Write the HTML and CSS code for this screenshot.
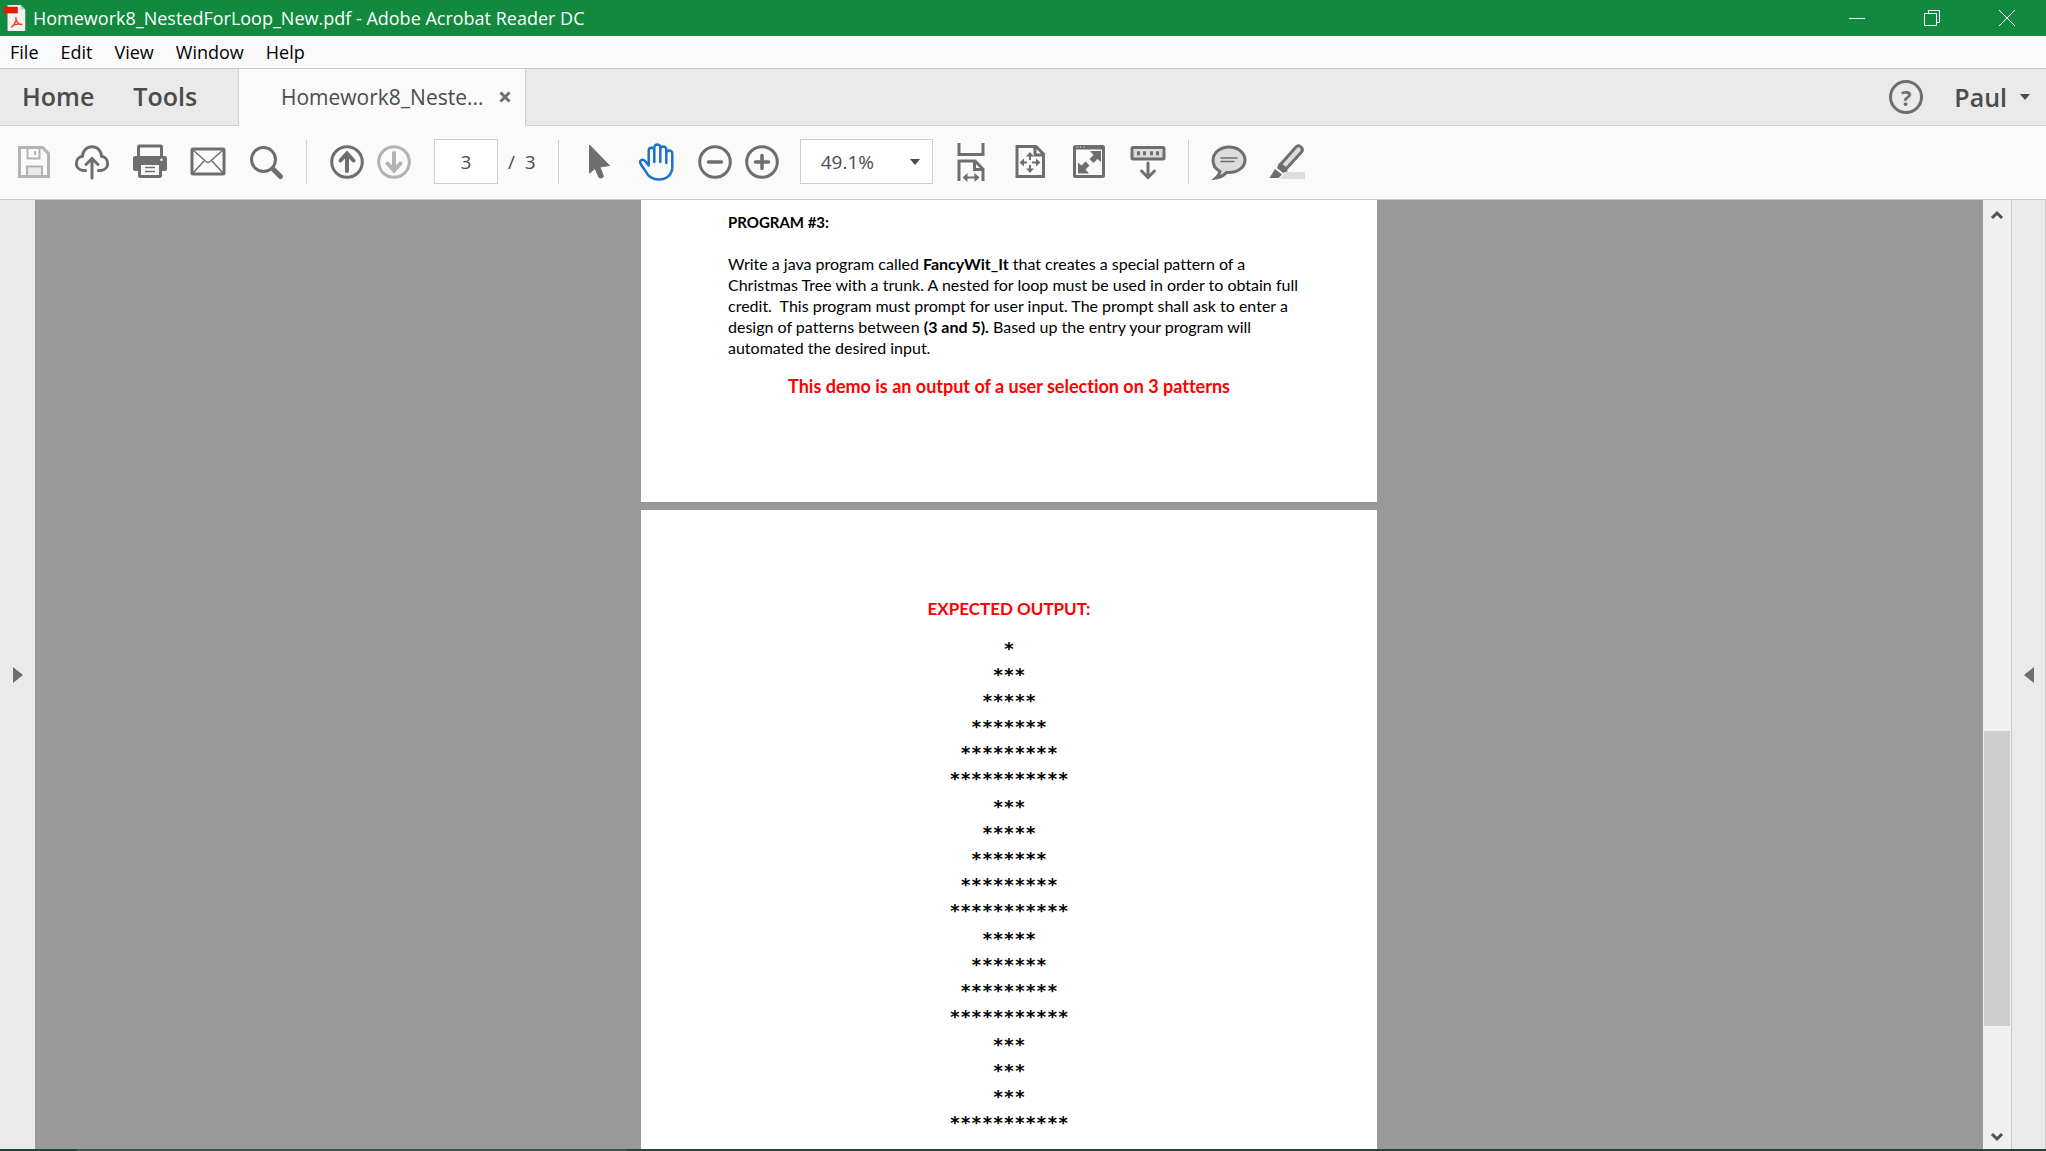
FILE: index.html
```
<!DOCTYPE html>
<html lang="en">
<head>
    <meta charset="UTF-8">
    <meta name="viewport" content="width=device-width, initial-scale=1.0">
    <title>Homework8_NestedForLoop_New.pdf - Adobe Acrobat Reader DC</title>
    <link rel="stylesheet" href="styles.css">
</head>
<body>
    <!-- Window title bar -->
    <header class="title-bar">
        <svg class="app-icon" viewBox="0 0 24 30">
            <path d="M4 1h14l5 5v23H4z" fill="#f4f1ef"/>
            <path d="M18 1l5 5h-5z" fill="#c9c5c2"/>
            <path d="M0 3h15v7H0z" fill="#e31b05"/>
            <path d="M8 25c3-2 6-7 5-11M13 15c0 4 3 7 7 7M8 25c2-3 7-4 12-3" fill="none" stroke="#e5432f" stroke-width="1.5"/>
        </svg>
        <span class="window-title">Homework8_NestedForLoop_New.pdf - Adobe Acrobat Reader DC</span>
        <div class="window-controls">
            <button class="window-button" aria-label="Minimize"><svg viewBox="0 0 18 18"><path d="M1 9.5h16"/></svg></button>
            <button class="window-button" aria-label="Restore"><svg viewBox="0 0 18 18"><path d="M1.5 4.5h12v12h-12zM5.500 4V1.500h11v12H14"/></svg></button>
            <button class="window-button" aria-label="Close"><svg viewBox="0 0 18 18"><path d="M1 1l16 16M17 1L1 17"/></svg></button>
        </div>
    </header>

    <!-- Menu bar -->
    <nav class="menu-bar">
        <button class="menu-item">File</button>
        <button class="menu-item">Edit</button>
        <button class="menu-item">View</button>
        <button class="menu-item">Window</button>
        <button class="menu-item">Help</button>
    </nav>

    <!-- Home, Tools and document tabs -->
    <div class="tab-bar">
        <div class="main-tabs">
            <button class="main-tab">Home</button>
            <button class="main-tab">Tools</button>
        </div>
        <div class="document-tab">
            <span class="document-name">Homework8_Neste...</span>
            <button class="close-tab" aria-label="Close tab"><svg viewBox="0 0 12 12"><path d="M1.500 1.500l9 9M10.500 1.500l-9 9"/></svg></button>
        </div>
        <div class="account">
            <button class="help-button" aria-label="Help">?</button>
            <button class="user-button">Paul <svg class="caret" viewBox="0 0 10 6"><path d="M0 0h10L5 6z"/></svg></button>
        </div>
    </div>

    <!-- Toolbar -->
    <div class="toolbar">
        <div class="tool-group">
            <button class="tool disabled" aria-label="Save" disabled>
                <svg viewBox="0 0 36 36"><path d="M11 22.500h15v10H11z" fill="#eaeaea" stroke-width="2"/><path d="M11.500 4v10.500h12V4M19 7v4" stroke-width="2"/><path d="M3.500 3.500h23l6 6v23h-29z"/></svg>
            </button>
            <button class="tool" aria-label="Upload">
                <svg viewBox="0 0 36 36"><path d="M11.500 26.500H9A7.200 7.200 0 0 1 8.500 12.200 9.500 9.500 0 0 1 27.500 12.200 7.200 7.200 0 0 1 27 26.500H24.500" stroke-linecap="round"/><path d="M18 15v19M12 20.500l6-6 6 6" stroke-linecap="round"/></svg>
            </button>
            <button class="tool" aria-label="Print">
                <svg viewBox="0 0 36 36"><rect x="6.500" y="2" width="23" height="14" rx="1"/><path d="M3 12h30q2 0 2 2v11q0 2-2 2H3q-2 0-2-2V14q0-2 2-2z" fill="#6e6e6e" stroke="none"/><rect x="7.500" y="19.500" width="21" height="13" rx="1" fill="#fafafa"/><path d="M13 23.500h10M13 27.500h10" stroke-width="1.500"/><circle cx="29.500" cy="15.700" r="1.200" fill="#fff" stroke="none"/></svg>
            </button>
            <button class="tool" aria-label="Email">
                <svg viewBox="0 0 36 36"><rect x="2" y="5" width="32" height="25" rx="1"/><path d="M3 6l13 11.500q2 1.500 4 0L33 6M3 29l11-12M33 29L22 17" stroke-width="1.500"/></svg>
            </button>
            <button class="tool" aria-label="Search">
                <svg viewBox="0 0 36 36"><circle cx="15.500" cy="15.500" r="12"/><path d="M25 25l7.500 7.500" stroke-width="5" stroke-linecap="round"/></svg>
            </button>
        </div>
        <span class="divider"></span>
        <div class="tool-group compact">
            <button class="tool" aria-label="Previous page">
                <svg viewBox="0 0 36 36"><circle cx="18" cy="18" r="15.300"/><path d="M18 27V10M11.500 16.500l6.500-7 6.500 7" stroke-width="4" stroke-linecap="round"/></svg>
            </button>
            <button class="tool disabled" aria-label="Next page" disabled>
                <svg viewBox="0 0 36 36"><circle cx="18" cy="18" r="15.300"/><path d="M18 9v17M11.500 19.500l6.500 7 6.500-7" stroke-width="4" stroke-linecap="round"/></svg>
            </button>
        </div>
        <input class="page-number" type="text" value="3" aria-label="Page number">
        <span class="page-total">/&nbsp; 3</span>
        <span class="divider"></span>
        <div class="tool-group">
            <button class="tool" aria-label="Selection tool">
                <svg viewBox="0 0 36 36"><path d="M8.500 1v28l5.500-4.500 4 9q2.500 1.500 4.500-1l-3.500-9.500 9.500-1.500z" fill="#6e6e6e" stroke-width="1" stroke-linejoin="round"/></svg>
            </button>
            <button class="tool active" aria-label="Hand tool">
                <svg viewBox="0 0 36 36"><path d="M9.700 21V6.500a2.800 2.800 0 0 1 5.600 0V18M15.300 18V3.500a3 3 0 0 1 6 0V18M21.300 18V5.500a3 3 0 0 1 6 0V19M27.300 19V9.500a3 3 0 0 1 6 0V23c0 7-5 12.500-13.300 12.500-7 0-11-3-13.500-8.500L1.700 20c-2-4 2-5.500 4.300-3l3.700 4.500" stroke-width="2.500" stroke-linecap="round"/></svg>
            </button>
            <button class="tool" aria-label="Zoom out">
                <svg viewBox="0 0 36 36"><circle cx="18" cy="18" r="15.300"/><path d="M11.500 18h13" stroke-width="3.500" stroke-linecap="round"/></svg>
            </button>
        </div>
        <div class="tool-group plus-group">
            <button class="tool" aria-label="Zoom in">
                <svg viewBox="0 0 36 36"><circle cx="18" cy="18" r="15.300"/><path d="M11.500 18h13M18 11.500v13" stroke-width="3.500" stroke-linecap="round"/></svg>
            </button>
        </div>
        <div class="zoom-box">
            <select class="zoom-level" aria-label="Zoom level"><option>49.1%</option></select>
            <svg class="caret" viewBox="0 0 10 6"><path d="M0 0h10L5 6z"/></svg>
        </div>
        <div class="tool-group view-group">
            <button class="tool" aria-label="Fit width">
                <svg viewBox="0 0 36 36"><path d="M6-1v11.500h24V-1M6 37V17h16l8 8v12M21.500 17v8.500H30"/><path d="M12 33.500h12" stroke-width="2"/><path d="M9.500 33.500l5-4.500v9zM26.500 33.500l-5-4.500v9z" fill="#6e6e6e" stroke="none"/></svg>
            </button>
            <button class="tool" aria-label="Fit page">
                <svg viewBox="0 0 36 36"><path d="M5 2.500h19l7.500 7.500v22.500H5zM23 3v8h8"/><path d="M18 12v13M11 18.500h14" stroke-width="2" stroke-dasharray="4 5 4"/><path d="M18 8l4 4.500h-8zM18 29l4-4.500h-8zM7.500 18.500l4.500-4v8zM28.500 18.500l-4.500-4v8z" fill="#6e6e6e" stroke="none"/></svg>
            </button>
            <button class="tool" aria-label="Full screen">
                <svg viewBox="0 0 36 36"><rect x="3.500" y="2.500" width="29" height="30" rx="1"/><path d="M3 3.500h30" stroke-width="4"/><path d="M5.500 3h1M9 3h1M12.500 3h1" stroke="#fafafa" stroke-width="1"/><path d="M30 7v11l-3.500-3-4 4-4-4 4-4-3.500-4zM7 29.500v-11l3.500 3 4-4 4 4-4 4 3.500 4z" fill="#6e6e6e" stroke="none"/></svg>
            </button>
            <button class="tool" aria-label="Read mode">
                <svg viewBox="0 0 36 36"><rect x="2" y="3.500" width="32" height="11.500" rx="1" fill="#ddd"/><path d="M7 9.300h3M13 9.300h3M20 9.300h3M26 9.300h3" stroke-width="4"/><path d="M18 19v14M11.500 27l6.500 6.500 6.500-6.500" stroke-linecap="round"/></svg>
            </button>
        </div>
        <span class="divider"></span>
        <div class="tool-group">
            <button class="tool" aria-label="Comment">
                <svg viewBox="0 0 36 36"><path d="M9 27.500C4.500 25 2 21 2 16.500 2 9 9 3 18 3s16 6 16 13-7 12.500-16 12.500h-2.500q-4 4.500-10.500 5.500 3.500-3 4-6.500z" fill="#ddd"/><path d="M10 14h16M10 17.500h13" stroke-width="1.500" stroke-linecap="round"/></svg>
            </button>
            <button class="tool" aria-label="Highlight">
                <svg viewBox="0 0 36 36"><path d="M17 28h19v7H10z" fill="#ddd" stroke="none"/><path d="M11.500 20.500L27 3q2.500-2.500 5 0t.500 5L17 25z" fill="#ddd" stroke-width="3"/><path d="M10 19l9 8-5 2-6-5zM6 25l7 5.500-3.500 3.500H0.500z" fill="#6e6e6e" stroke="none"/></svg>
            </button>
        </div>
    </div>

    <!-- Document area -->
    <div class="workspace">
        <button class="side-rail" aria-label="Open left pane"><svg viewBox="0 0 10 16"><path d="M0 0l10 8-10 8z"/></svg></button>
        <main class="document">
            <section class="page page-first">
                <h2 class="program-heading">PROGRAM #3:</h2>
                <p class="program-text">
                    Write a java program called <b>FancyWit_It</b> that creates a special pattern of a<br>
                    Christmas Tree with a trunk. A nested for loop must be used in order to obtain full<br>
                    credit.&nbsp; This program must prompt for user input. The prompt shall ask to enter a<br>
                    design of patterns between <b>(3 and 5).</b> Based up the entry your program will<br>
                    automated the desired input.
                </p>
                <p class="demo-text">This demo is an output of a user selection on 3 patterns</p>
            </section>
            <section class="page page-second">
                <h2 class="output-heading">EXPECTED OUTPUT:</h2>
                <div class="tree">
<pre class="tree-part">*
***
*****
*******
*********
***********</pre>
<pre class="tree-part">***
*****
*******
*********
***********</pre>
<pre class="tree-part">*****
*******
*********
***********</pre>
<pre class="tree-part">***
***
***
***********</pre>
                </div>
            </section>
        </main>
        <div class="scrollbar">
            <button class="scroll-button" aria-label="Scroll up"><svg viewBox="0 0 12 10"><path d="M1 8l5-5 5 5"/></svg></button>
            <div class="scroll-track"><div class="scroll-thumb"></div></div>
            <button class="scroll-button scroll-down" aria-label="Scroll down"><svg viewBox="0 0 12 10"><path d="M1 2l5 5 5-5"/></svg></button>
        </div>
        <button class="side-rail rail-right" aria-label="Open right pane"><svg viewBox="0 0 10 16"><path d="M10 0L0 8l10 8z"/></svg></button>
    </div>
    <footer class="taskbar-edge"></footer>
</body>
</html>
```
FILE: styles.css
```
* {
    box-sizing: border-box;
}

/* The window fills the screen, the document area takes what is left */
body {
    margin: 0;
    height: 100vh;
    display: flex;
    flex-direction: column;
    overflow: hidden;
    font-family: "Open Sans", "Noto Sans", sans-serif;
    color: #000;
    background-color: #fafafa;
}

button {
    margin: 0;
    padding: 0;
    border: none;
    background: none;
    font: inherit;
    color: inherit;
    cursor: pointer;
}

svg {
    display: block;
    overflow: visible;
}

/* Title bar */
.title-bar {
    display: flex;
    align-items: center;
    height: 36px;
    padding: 0 2px 0 3px;
    background-color: #11893e;
    color: white;
    font-size: 18px;
}

.app-icon {
    width: 24px;
    height: 28px;
    margin-right: 6px;
}

.window-controls {
    display: flex;
    margin-left: auto;
}

.window-button {
    display: flex;
    align-items: center;
    justify-content: center;
    width: 75px;
    height: 36px;
}

.window-button svg {
    width: 18px;
    height: 18px;
    fill: none;
    stroke: white;
    stroke-width: 1;
}

/* Menu bar */
.menu-bar {
    display: flex;
    align-items: center;
    gap: 22px;
    height: 33px;
    padding-left: 10px;
    border-bottom: 1px solid #c8c8c8;
    font-size: 18px;
}

/* Tab bar */
.tab-bar {
    display: flex;
    height: 57px;
    background-color: #eaeaea;
    color: #4b4b4b;
}

.main-tabs {
    display: flex;
    align-items: center;
    gap: 39px;
    width: 239px;
    padding: 0 0 2px 22px;
    border-right: 1px solid #cecece;
    border-bottom: 1px solid #cecece;
}

.main-tab {
    font-size: 25px;
    font-weight: 600;
}

.document-tab {
    display: flex;
    align-items: center;
    justify-content: space-between;
    width: 287px;
    padding: 0 14px 2px 42px;
    border-right: 1px solid #cecece;
    background-color: #fafafa;
    font-size: 21px;
}

.close-tab svg {
    width: 12px;
    height: 12px;
    stroke: #6e6e6e;
    stroke-width: 3;
}

.account {
    display: flex;
    flex: 1;
    align-items: center;
    justify-content: flex-end;
    gap: 31px;
    padding-right: 16px;
    border-bottom: 1px solid #cecece;
}

.help-button {
    width: 34px;
    height: 34px;
    border: 3px solid #6e6e6e;
    border-radius: 50%;
    color: #6e6e6e;
    font-size: 22px;
    font-weight: bold;
    line-height: 28px;
}

.user-button {
    display: flex;
    align-items: center;
    gap: 13px;
    font-size: 25px;
    font-weight: 600;
}

.caret {
    width: 10px;
    height: 6px;
    fill: #4b4b4b;
}

/* Toolbar */
.toolbar {
    display: flex;
    align-items: center;
    height: 74px;
    padding: 0 0 2px 16px;
    border-bottom: 1px solid #c8c8c8;
    color: #4b4b4b;
    font-size: 19px;
}

.tool-group {
    display: flex;
    gap: 22px;
}

.compact {
    gap: 11px;
}

.view-group {
    gap: 23px;
}

.plus-group {
    margin-left: 11px;
}

.tool {
    width: 36px;
    height: 36px;
}

.tool svg {
    width: 36px;
    height: 36px;
    fill: none;
    stroke: #6e6e6e;
    stroke-width: 3;
}

.tool.disabled svg {
    stroke: #b3b3b3;
}

.tool.active svg {
    stroke: #1a73c9;
}

.divider {
    width: 1px;
    height: 44px;
    margin: 0 22px;
    background-color: #cecece;
}

.page-number {
    width: 64px;
    height: 45px;
    margin-left: 22px;
    padding: 0;
    border: 1px solid #cecece;
    background-color: white;
    color: inherit;
    font: inherit;
    text-align: center;
}

.page-total {
    margin-left: 10px;
}

/* Zoom drop-down with its own arrow */
.zoom-box {
    position: relative;
    margin: 0 20px;
}

.zoom-level {
    display: block;
    width: 133px;
    height: 45px;
    padding: 0 20px;
    border: 1px solid #cecece;
    border-radius: 0;
    background-color: white;
    color: inherit;
    font: inherit;
    appearance: none;
}

.zoom-box .caret {
    position: absolute;
    top: 20px;
    right: 13px;
    pointer-events: none;
}

/* Document area */
.workspace {
    display: flex;
    flex: 1;
    min-height: 0;
}

.side-rail {
    display: flex;
    align-items: center;
    justify-content: center;
    width: 35px;
    background-color: #eaeaea;
}

.side-rail svg {
    width: 10px;
    height: 16px;
    fill: #6e6e6e;
}

.rail-right {
    border-left: 1px solid #c8c8c8;
    border-right: 1px solid #c8c8c8;
}

.document {
    display: flex;
    flex: 1;
    flex-direction: column;
    align-items: center;
    gap: 8px;
    overflow: hidden;
    background-color: #999;
}

.page {
    width: 736px;
    background-color: white;
    font-family: Lato, "Open Sans", sans-serif;
    font-size: 16px;
    font-variant-ligatures: none;
    line-height: 21px;
}

.page-first {
    padding: 12px 87px 105px;
}

.page-second {
    flex: 1;
    padding-top: 88px;
}

.program-heading {
    margin: 0 0 20px;
    font-size: 15px;
}

.program-text {
    margin: 0;
    white-space: nowrap;
}

.demo-text,
.output-heading {
    color: #ff0000;
    font-weight: bold;
    text-align: center;
}

.demo-text {
    margin: 18px 0 0;
    font-size: 18px;
}

.output-heading {
    margin: 0 0 17px;
    font-size: 17px;
}

/* Christmas tree, one block per layer */
.tree {
    display: flex;
    flex-direction: column;
    gap: 2px;
}

.tree-part {
    margin: 0;
    font-family: "DejaVu Sans Mono", monospace;
    font-size: 18px;
    font-weight: bold;
    line-height: 26px;
    text-align: center;
}

/* Scrollbar */
.scrollbar {
    display: flex;
    flex-direction: column;
    width: 28px;
    background-color: #f0f0f0;
}

.scroll-button {
    display: flex;
    align-items: center;
    justify-content: center;
    height: 30px;
}

.scroll-down {
    height: 25px;
}

.scroll-button svg {
    width: 12px;
    height: 10px;
    fill: none;
    stroke: #505050;
    stroke-width: 3;
}

.scroll-track {
    display: flex;
    flex: 1;
    flex-direction: column;
    justify-content: flex-end;
    padding: 0 1px 98px;
}

.scroll-thumb {
    height: 37%;
    background-color: #cdcdcd;
}

/* Strip of the taskbar under the window */
.taskbar-edge {
    height: 2px;
    background: linear-gradient(to right, #1b4533 77px, #365949 77px, #365949 627px, #234637 627px);
}
```
